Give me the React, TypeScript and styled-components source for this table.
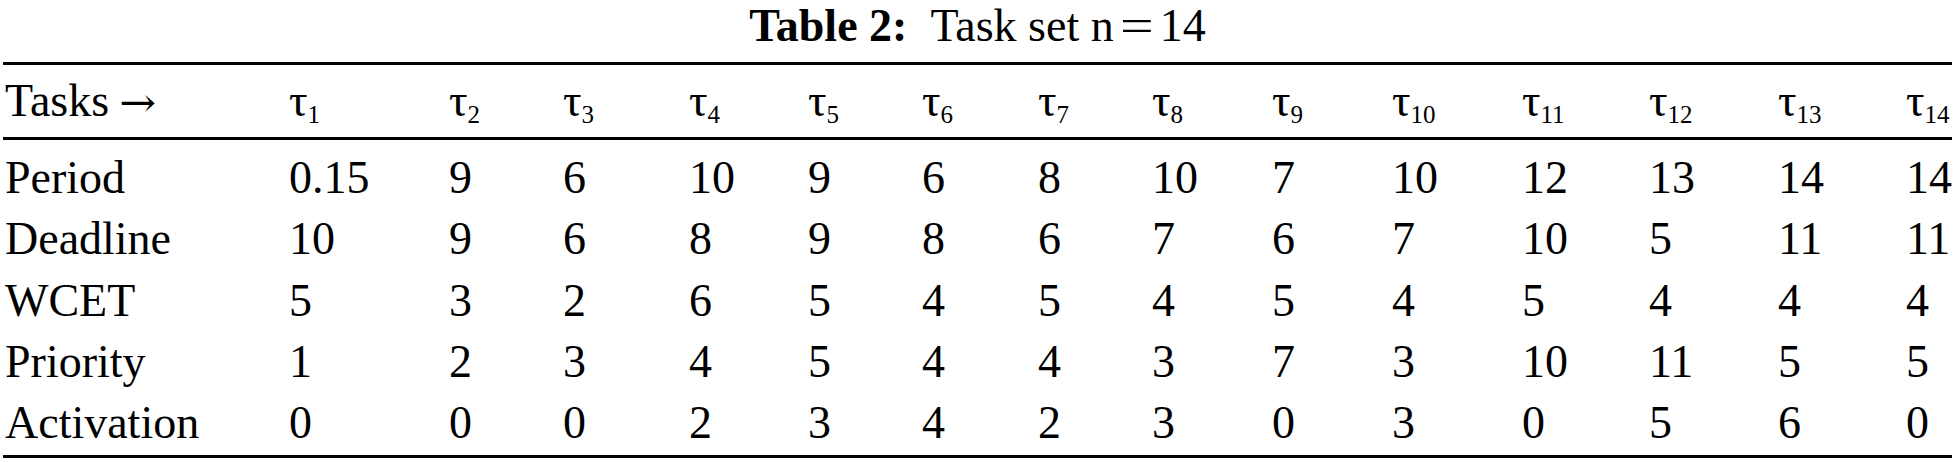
import React from "react";
import styled, { createGlobalStyle } from "styled-components";

const GlobalStyle = createGlobalStyle`
  html, body {
    margin: 0;
    padding: 0;
    background: #fff;
  }
  body {
    font-family: "Liberation Serif", "Times New Roman", serif;
    color: #000;
  }
`;

// column widths measured from the reference, label column first
const COLUMNS = [285, 160, 114, 126, 119, 114, 116, 114, 120, 120, 130, 127, 129, 128, 47];
const template = COLUMNS.map((w) => `${w}px`).join(" ");

const rows: { label: string; values: string[] }[] = [
  { label: "Period", values: ["0.15", "9", "6", "10", "9", "6", "8", "10", "7", "10", "12", "13", "14", "14"] },
  { label: "Deadline", values: ["10", "9", "6", "8", "9", "8", "6", "7", "6", "7", "10", "5", "11", "11"] },
  { label: "WCET", values: ["5", "3", "2", "6", "5", "4", "5", "4", "5", "4", "5", "4", "4", "4"] },
  { label: "Priority", values: ["1", "2", "3", "4", "5", "4", "4", "3", "7", "3", "10", "11", "5", "5"] },
  { label: "Activation", values: ["0", "0", "0", "2", "3", "4", "2", "3", "0", "3", "0", "5", "6", "0"] },
];

function App() {
  return (
    <Page>
      <GlobalStyle />
      <Caption>
        <b>Table 2:</b>&nbsp;&nbsp;Task set n<Eq>=</Eq>14
      </Caption>
      <Table>
        <Head>
          <Row>
            <Cell>
              Tasks<Arrow>→</Arrow>
            </Cell>
            {rows[0].values.map((_, i) => (
              <Cell key={i}>
                τ<Sub>{i + 1}</Sub>
              </Cell>
            ))}
          </Row>
        </Head>
        <Body>
          {rows.map((r) => (
            <BodyRow key={r.label}>
              <Cell>{r.label}</Cell>
              {r.values.map((v, i) => (
                <Cell key={i}>{v}</Cell>
              ))}
            </BodyRow>
          ))}
        </Body>
      </Table>
    </Page>
  );
}

export default App;

const Page = styled.div`
  width: 1954px;
  height: 462px;
  padding-left: 3px;
  box-sizing: border-box;
  overflow: hidden;
`;
const Caption = styled.div`
  width: 1949px;
  text-align: center;
  font-size: 46px;
  line-height: 51px;
  height: 51px;
  margin-bottom: 11px;
  b {
    font-weight: bold;
  }
`;
const Eq = styled.span`
  display: inline-block;
  margin: 0 10px 0 10px;
  transform: scaleX(1.3);
`;
const Table = styled.div`
  width: 1949px;
  border-top: 3px solid #000;
  border-bottom: 3px solid #000;
`;
const Head = styled.div`
  border-bottom: 3px solid #000;
`;
const Body = styled.div`
  padding: 7px 0 2px;
`;
const Row = styled.div`
  display: grid;
  grid-template-columns: ${template};
  height: 72px;
  line-height: 72px;
  font-size: 46px;
  white-space: nowrap;
`;
const BodyRow = styled(Row)`
  height: 61.25px;
  line-height: 61.25px;
`;
const Cell = styled.div`
  padding-left: 1px;
  &:first-child {
    padding-left: 2px;
  }
`;
const Arrow = styled.span`
  display: inline-block;
  margin-left: 12px;
  font-family: "DejaVu Serif", "Liberation Serif", serif;
  font-size: 40px;
  transform: scaleX(1.1);
`;
const Sub = styled.span`
  font-size: 25px;
  vertical-align: -7px;
  line-height: 0;
`;
